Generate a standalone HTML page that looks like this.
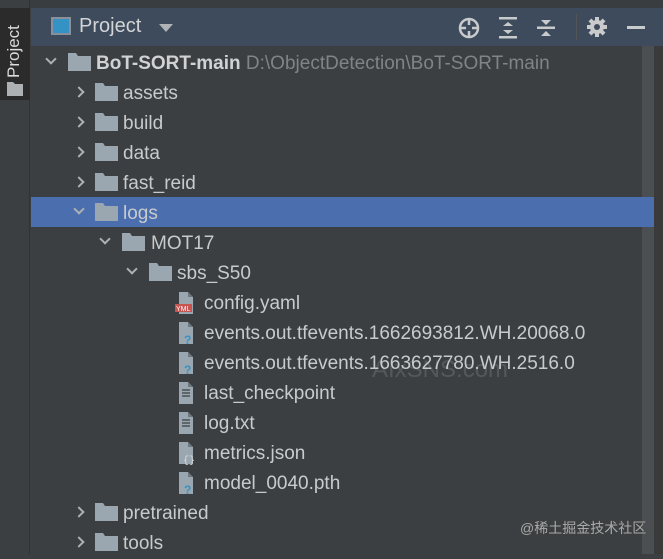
<!DOCTYPE html>
<html><head><meta charset="utf-8"><style>
*{margin:0;padding:0;box-sizing:border-box}
body{width:663px;height:554px;background:#3c3f41;font-family:"Liberation Sans","Noto Sans CJK SC",sans-serif;overflow:hidden;position:relative;color:#bbbbbb}
.strip{position:absolute;left:0;top:0;width:30px;height:554px;background:#3c3f41;border-right:1px solid #323232}
.tab{position:absolute;left:0;top:8px;width:30px;height:92px;background:#2b2b2b}
.tab span{position:absolute;left:4px;top:70px;transform:rotate(-90deg);transform-origin:0 0;font-size:17px;color:#dcdcdc;white-space:nowrap}
.hdr{position:absolute;left:31px;top:8px;width:632px;height:38px;background:#3d4b5c}
.top{position:absolute;left:0;top:0;width:663px;height:8px;background:#3a3d3f}
.row{position:absolute;left:31px;height:30px;width:623px;font-size:19px;line-height:30px;white-space:nowrap}
.sel{background:#4b6eaf}
.row>span,.row>i{position:absolute}
.chev{width:8px;height:8px;border-right:2px solid #aeb1b4;border-bottom:2px solid #aeb1b4}
.r{transform:rotate(-45deg);top:11px}
.d{transform:rotate(45deg);top:8px}
.fold{top:6px;width:23px;height:18px}
.t{color:#c8cbcd;top:2px}
.scroll{position:absolute;left:642px;top:46px;width:12px;height:508px;background:#4c4f51}
.rt{position:absolute;left:654px;top:46px;width:9px;height:508px;background:#3a3a3a}
</style></head><body>
<div class="top"></div>
<div class="strip"></div>
<div class="tab"><span>Project</span></div>
<svg style="position:absolute;left:7px;top:82px" width="16" height="14"><path d="M0 0h6l2 2h8v12H0z" fill="#aeb1b4"/></svg>
<div class="hdr">
<div style="position:absolute;left:20px;top:9px;width:20px;height:18px;border:2px solid #8a9099;background:#3592c4"></div>
<span style="position:absolute;left:48px;top:7px;font-size:20px;color:#d2d4d6">Project</span>
<svg style="position:absolute;left:128px;top:16px" width="14" height="8"><path d="M0 0h14L7 8z" fill="#b0b3b6"/></svg>
<svg style="position:absolute;left:426px;top:8px" width="24" height="24" fill="none" stroke="#c8cacc" stroke-width="2.5"><circle cx="12" cy="12" r="9"/><path d="M12 3v6M12 15v6M3 12h6M15 12h6"/></svg>
<svg style="position:absolute;left:466px;top:8px" width="22" height="24" fill="#c8cacc"><rect x="2" y="1" width="18" height="2.5"/><rect x="2" y="20" width="18" height="2.5"/><path d="M11 6l5 4H6zM11 18l5-4H6z"/></svg>
<svg style="position:absolute;left:504px;top:8px" width="22" height="24" fill="#c8cacc"><rect x="2" y="10.5" width="18" height="2.5"/><path d="M11 9l5-5H6zM11 15l5 5H6z"/></svg>
<div style="position:absolute;left:545px;top:6px;width:1px;height:26px;background:#555"></div>
<svg style="position:absolute;left:555px;top:8px" width="22" height="22"><g fill="#c8cacc"><rect x="9" y="1" width="4" height="20"/><rect x="9" y="1" width="4" height="20" transform="rotate(45 11 11)"/><rect x="9" y="1" width="4" height="20" transform="rotate(90 11 11)"/><rect x="9" y="1" width="4" height="20" transform="rotate(135 11 11)"/><circle cx="11" cy="11" r="7"/></g><circle cx="11" cy="11" r="3" fill="#3d4b5c"/></svg>
<div style="position:absolute;left:596px;top:18px;width:18px;height:3px;background:#c8cacc"></div>
</div>
<div class="scroll"></div><div class="rt"></div>

<div id="tree"></div>
<script>
const F='<svg class="fold" viewBox="0 0 23 18" style="position:absolute;top:6px"><path d="M0 0h8l2 3h13v15H0z" fill="#9aa7b0"/></svg>';
const rows=[
[0,'d','f','<b style="font-weight:bold;color:#d0d2d4">BoT-SORT-main</b> <span style="color:#808487">D:\\ObjectDetection\\BoT-SORT-main</span>'],
[1,'r','f','assets'],[1,'r','f','build'],[1,'r','f','data'],[1,'r','f','fast_reid'],[1,'d','f','logs',1],
[2,'d','f','MOT17'],[3,'d','f','sbs_S50'],
[4,'','y','config.yaml'],[4,'','q','events.out.tfevents.1662693812.WH.20068.0'],[4,'','q','events.out.tfevents.1663627780.WH.2516.0'],
[4,'','t','last_checkpoint'],[4,'','t','log.txt'],[4,'','j','metrics.json'],[4,'','q','model_0040.pth'],
[1,'r','f','pretrained'],[1,'r','f','tools']];
const cx=[16,44,70,97],fx=[37,64,91,118,147],tx=[65,92,120,146,173];
let h='';
rows.forEach((r,i)=>{const y=47+i*30;const[l,c,ic,t,s]=r;
h+=`<div class="row${s?' sel':''}" style="top:${y}px">`;
if(c)h+=`<i class="chev ${c}" style="left:${cx[l]}px"></i>`;
if(ic=='f')h+=F.replace('style="','style="left:'+fx[l]+'px;');
else{let ex='';
if(ic=='y')ex='<rect x="0" y="13" width="17" height="8" fill="#c75450"/><text x="1" y="20" font-size="7" fill="#fff" font-family="Liberation Sans">YML</text>';
if(ic=='q')ex='<text x="9" y="23" font-size="12" font-weight="bold" fill="#3592c4" font-family="Liberation Sans">?</text>';
if(ic=='t')ex='<path d="M7 9h8M7 12h8M7 15h8" stroke="#3c3f41" stroke-width="1.3"/>';
if(ic=='j')ex='<text x="8" y="22" font-size="10" fill="#ddd" font-family="Liberation Mono">{}</text>';
h+=`<svg style="position:absolute;left:${fx[l]-3}px;top:4px" width="22" height="24"><path d="M4 1h9l5 5v17H4z" fill="#9aa7b0"/><path d="M13 1v5h5" fill="#6e777e"/>${ex}</svg>`;}
h+=`<span class="t" style="left:${tx[l]}px">${t}</span></div>`;});
document.getElementById('tree').innerHTML=h;
</script>
<div style="position:absolute;left:372px;top:356px;font-size:24px;color:rgba(200,200,200,0.18)">AIxSNS.com</div>
<div style="position:absolute;left:520px;top:518px;font-size:14px;color:#a9a9a9">@稀土掘金技术社区</div>
</body></html>
